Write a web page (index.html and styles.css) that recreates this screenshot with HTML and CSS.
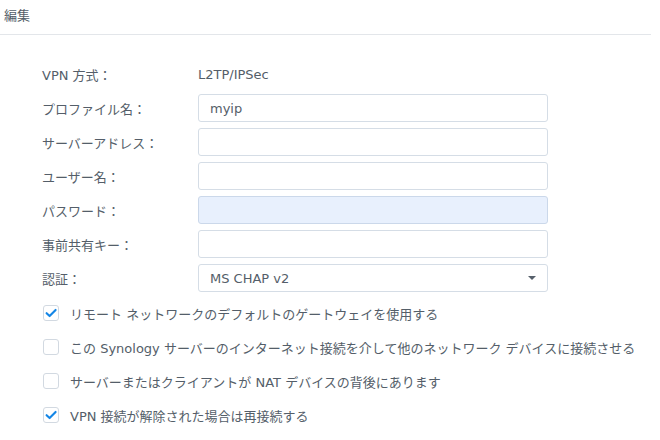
FILE: index.html
```html
<!DOCTYPE html>
<html lang="ja">
<head>
<meta charset="utf-8">
<link rel="stylesheet" href="styles.css">
</head>
<body>
<div class="header">編集</div>
<div class="form">
  <div class="row"><div class="label">VPN 方式：</div><div class="value">L2TP/IPSec</div></div>
  <div class="row"><div class="label">プロファイル名：</div><div class="input">myip</div></div>
  <div class="row"><div class="label">サーバーアドレス：</div><div class="input"></div></div>
  <div class="row"><div class="label">ユーザー名：</div><div class="input"></div></div>
  <div class="row"><div class="label">パスワード：</div><div class="input filled"></div></div>
  <div class="row"><div class="label">事前共有キー：</div><div class="input"></div></div>
  <div class="row"><div class="label">認証：</div><div class="input select"><span>MS CHAP v2</span><span class="arrow"></span></div></div>
</div>
<div class="checks">
  <div class="check"><span class="box"><svg viewBox="0 0 16 16" width="16" height="16"><path d="M3.6 8.2 L6.6 11.1 L12.6 4.9" fill="none" stroke="#1486e6" stroke-width="2.1" stroke-linecap="round" stroke-linejoin="round"/></svg></span><span class="ctext">リモート ネットワークのデフォルトのゲートウェイを使用する</span></div>
  <div class="check"><span class="box"></span><span class="ctext">この Synology サーバーのインターネット接続を介して他のネットワーク デバイスに接続させる</span></div>
  <div class="check"><span class="box"></span><span class="ctext">サーバーまたはクライアントが NAT デバイスの背後にあります</span></div>
  <div class="check"><span class="box"><svg viewBox="0 0 16 16" width="16" height="16"><path d="M3.6 8.2 L6.6 11.1 L12.6 4.9" fill="none" stroke="#1486e6" stroke-width="2.1" stroke-linecap="round" stroke-linejoin="round"/></svg></span><span class="ctext">VPN 接続が解除された場合は再接続する</span></div>
</div>
</body>
</html>
```
FILE: styles.css
```css
html, body {
  margin: 0;
  padding: 0;
  background: #fff;
}
body {
  font-family: "DejaVu Sans", "Noto Sans CJK JP", sans-serif;
  font-size: 13px;
  color: #545e69;
  width: 660px;
  height: 440px;
  overflow: hidden;
}
.header {
  width: 651px;
  height: 35px;
  box-sizing: border-box;
  padding: 7px 0 0 4px;
  line-height: 18px;
  border-bottom: 1px solid #e3e6ea;
}
.form {
  display: flex;
  flex-direction: column;
  gap: 6px;
  padding: 25px 0 0 42px;
}
.row {
  display: flex;
  align-items: center;
  height: 28px;
}
.label {
  width: 156px;
}
.input {
  width: 350px;
  height: 28px;
  box-sizing: border-box;
  border: 1px solid #d5dde6;
  border-radius: 3px;
  padding: 0 11px;
  display: flex;
  align-items: center;
  background: #fff;
}
.input.filled {
  background: #e8f0fd;
  border-color: #cbd8ea;
}
.input.select {
  justify-content: space-between;
  padding-right: 11px;
}
.arrow {
  width: 0;
  height: 0;
  border-left: 4.5px solid transparent;
  border-right: 4.5px solid transparent;
  border-top: 4.5px solid #56606b;
}
.checks {
  display: flex;
  flex-direction: column;
  gap: 6px;
  padding: 7px 0 0 43px;
}
.check {
  display: flex;
  align-items: center;
  height: 28px;
  white-space: nowrap;
}
.box {
  width: 16px;
  height: 16px;
  box-sizing: border-box;
  border: 1px solid #d2d9e1;
  border-radius: 3px;
  background: #fff;
  margin-right: 11px;
  display: flex;
  align-items: center;
  justify-content: center;
  flex: none;
}
.box svg {
  display: block;
  margin: -1px;
}
```
